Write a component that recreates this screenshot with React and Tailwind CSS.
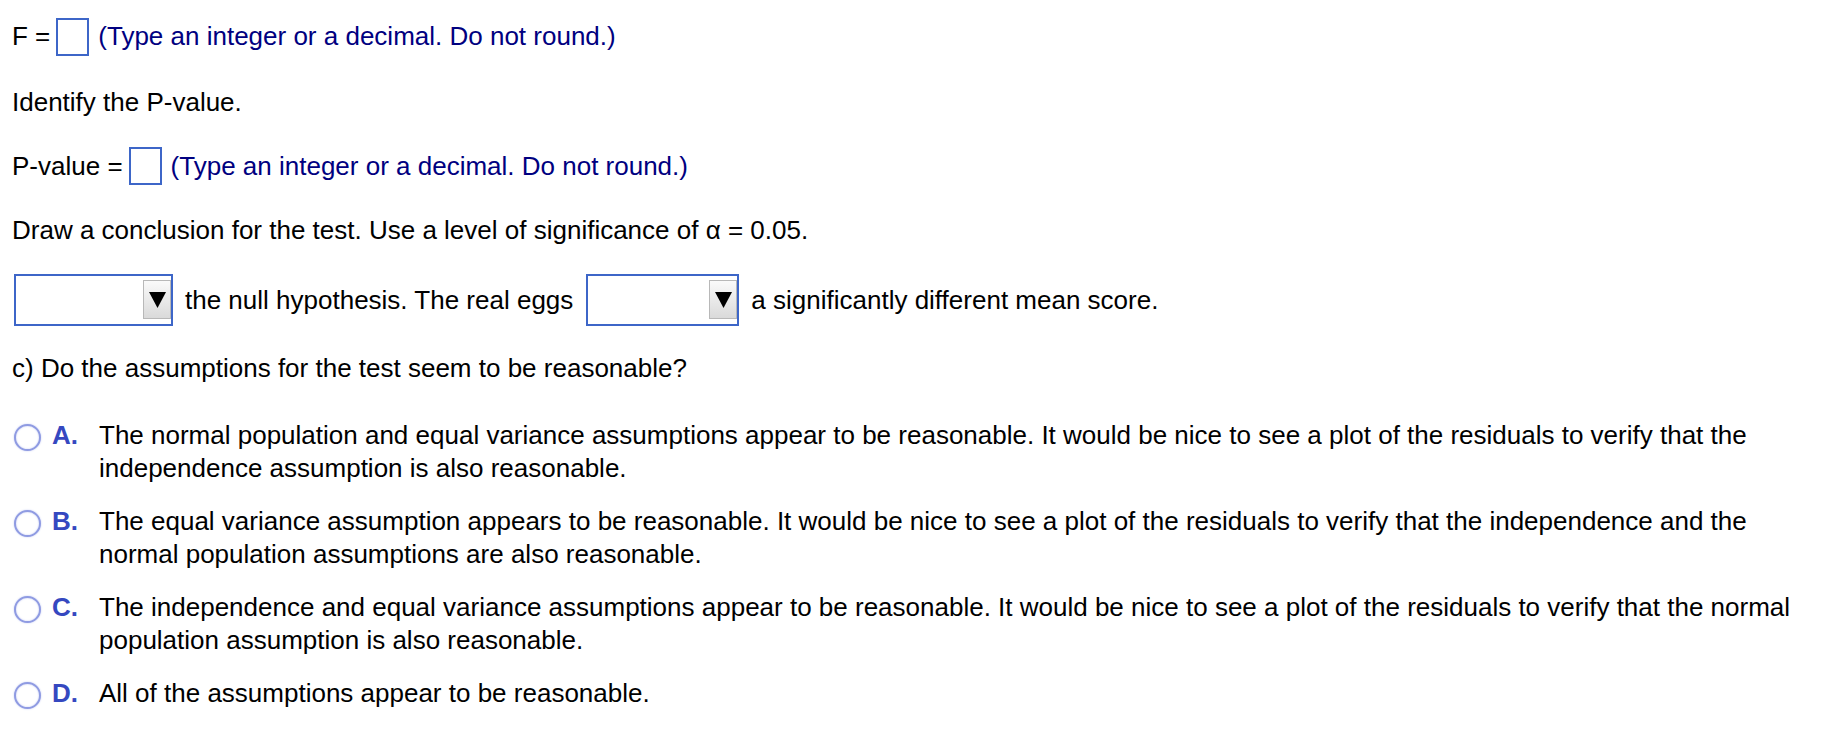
import React from "react";

function Box() {
  return <div className="w-[33px] h-[38px] border-2 border-[#3d66c8] bg-white shrink-0" />;
}

function Dropdown({ w }) {
  return (
    <div className={`${w} h-[52px] border-2 border-[#3d66c8] bg-white flex justify-end items-start pt-[4px]`}>
      <div className="w-[28px] h-[39px] border border-[#b8b8b8] bg-gradient-to-b from-[#fafafa] to-[#dadada] flex items-center justify-center">
        <svg width="17" height="16" viewBox="0 0 17 16">
          <polygon points="0,0 17,0 8.5,16" fill="#000" />
        </svg>
      </div>
    </div>
  );
}

function Radio() {
  return (
    <div className="w-[28px] h-[33px] flex items-center pt-[4px]">
      <div className="w-[27px] h-[27px] rounded-full border-[2.5px] border-[#8f9be2] bg-white shadow-[0_0_2px_#c3caf2,inset_0_0_2px_#c3caf2]" />
    </div>
  );
}

function Option({ letter, children }) {
  return (
    <div className="flex items-start">
      <div className="ml-[2px] mr-[10px]">
        <Radio />
      </div>
      <div className="w-[47px] shrink-0 font-bold text-[#3548c0] leading-[33px]">{letter}</div>
      <div className="leading-[33px] w-[1725px]">{children}</div>
    </div>
  );
}

export default function App() {
  return (
    <div className="w-[1832px] h-[732px] bg-white text-black text-[26px] pl-3 font-['Liberation_Sans',Arial,sans-serif] overflow-hidden">
      <div className="flex items-center h-[39px] mt-[17px]">
        <span>F =</span>
        <div className="ml-[6px]"><Box /></div>
        <span className="ml-[9px] text-[#000080]">(Type an integer or a decimal. Do not round.)</span>
      </div>
      <div className="leading-[30px] mt-[31px]">Identify the P-value.</div>
      <div className="flex items-center h-[38px] mt-[30px]">
        <span>P-value =</span>
        <div className="ml-[6px]"><Box /></div>
        <span className="ml-[9px] text-[#000080]">(Type an integer or a decimal. Do not round.)</span>
      </div>
      <div className="leading-[30px] mt-[30px]">Draw a conclusion for the test. Use a level of significance of α = 0.05.</div>
      <div className="flex items-center mt-[29px] ml-[2px]">
        <Dropdown w="w-[159px]" />
        <span className="ml-[12px] mr-[13px]">the null hypothesis. The real eggs</span>
        <Dropdown w="w-[153px]" />
        <span className="ml-[12px]">a significantly different mean score.</span>
      </div>
      <div className="leading-[30px] mt-[27px]">c) Do the assumptions for the test seem to be reasonable?</div>
      <div className="mt-[36px] flex flex-col gap-[20px]">
        <Option letter="A.">
          The normal population and equal variance assumptions appear to be reasonable. It would be nice to see a plot of the residuals to verify that the independence assumption is also reasonable.
        </Option>
        <Option letter="B.">
          The equal variance assumption appears to be reasonable. It would be nice to see a plot of the residuals to verify that the independence and the normal population assumptions are also reasonable.
        </Option>
        <Option letter="C.">
          The independence and equal variance assumptions appear to be reasonable. It would be nice to see a plot of the residuals to verify that the normal population assumption is also reasonable.
        </Option>
        <Option letter="D.">All of the assumptions appear to be reasonable.</Option>
      </div>
    </div>
  );
}
